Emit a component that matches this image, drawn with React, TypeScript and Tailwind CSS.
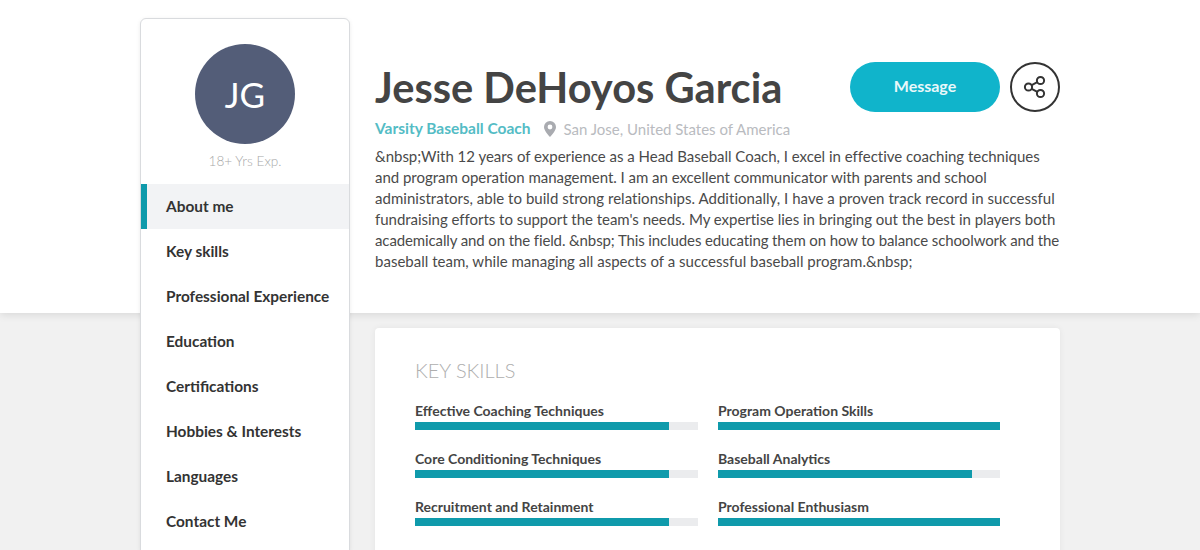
import React from "react";

const nav = ["About me", "Key skills", "Professional Experience", "Education", "Certifications", "Hobbies & Interests", "Languages", "Contact Me"];
const skills: [string, number, number][] = [
  ["Effective Coaching Techniques", 254, 283],
  ["Program Operation Skills", 282, 282],
  ["Core Conditioning Techniques", 254, 283],
  ["Baseball Analytics", 254, 282],
  ["Recruitment and Retainment", 254, 283],
  ["Professional Enthusiasm", 282, 282],
];
const bio: [string, string][] = [
  ["&nbsp;With 12 years of experience as a Head Baseball Coach, I excel in effective coaching techniques", "block tracking-[-0.02px]"],
  ["and program operation management. I am an excellent communicator with parents and school", "block tracking-[-0.03px]"],
  ["administrators, able to build strong relationships. Additionally, I have a proven track record in successful", "block tracking-[0.03px]"],
  ["fundraising efforts to support the team's needs. My expertise lies in bringing out the best in players both", "block tracking-[-0.03px]"],
  ["academically and on the field. &nbsp; This includes educating them on how to balance schoolwork and the", "block tracking-[-0.115px]"],
  ["baseball team, while managing all aspects of a successful baseball program.&nbsp;", "block tracking-[0.02px]"],
];

export default function App() {
  return (
    <div className="relative h-[550px] w-full overflow-hidden bg-[#f1f1f1] font-['Lato',sans-serif]">
      <div className="absolute inset-x-0 top-0 h-[313px] bg-white shadow-[0_2px_8px_rgba(0,0,0,0.1)]" />
      <div className="relative mx-auto flex w-[920px] items-start gap-[25px] pt-[18px]">
        <aside className="w-[210px] shrink-0 rounded-t-[6px] border border-[#d9dbde] bg-white pt-[25px] shadow-[0_1px_4px_rgba(0,0,0,0.08)]">
          <div className="flex flex-col items-center">
            <div className="flex h-[100px] w-[100px] items-center justify-center rounded-full bg-[#535d78] text-[35px] font-normal text-white">JG</div>
            <div className="mt-[8px] text-[13.600px] leading-[18px] font-light text-[#a8a8a8]">18+ Yrs Exp.</div>
          </div>
          <nav className="mt-[14px] pb-[6px]">
            {nav.map((item, i) => (
              <div
                key={item}
                className={
                  i === 0
                    ? "flex h-[45px] items-center border-l-[6px] border-[#0f9aab] bg-[#f2f3f5] pl-[19px] text-[15.400px] font-bold text-[#333333]"
                    : "flex h-[45px] items-center pl-[25px] text-[15.400px] font-bold text-[#333333]"
                }
              >
                {item}
              </div>
            ))}
          </nav>
        </aside>

        <main className="min-w-0 flex-1">
          <div className="flex h-[94px] items-start justify-between">
            <h1 className="mt-[42px] text-[41.600px] leading-[54px] font-bold text-[#444444]">Jesse DeHoyos Garcia</h1>
            <div className="mt-[44px] flex items-center gap-[10px]">
              <button className="h-[50px] w-[150px] rounded-full bg-[#10b4cb] pb-[2px] text-[16px] font-bold text-[#e9f8fa]">Message</button>
              <button className="flex h-[50px] w-[50px] items-center justify-center rounded-full border-2 border-[#333333] bg-white text-[#333333]">
                <svg width="26" height="26" viewBox="0 0 26 26" fill="none" stroke="currentColor" strokeWidth="2">
                  <circle cx="18.5" cy="6.5" r="3.6" />
                  <circle cx="6.5" cy="13" r="3.6" />
                  <circle cx="18.5" cy="19.5" r="3.6" />
                  <path d="M9.700 11.200l5.600-3M9.700 14.800l5.600 3" />
                </svg>
              </button>
            </div>
          </div>

          <div className="mt-[7px] flex h-[20px] items-center text-[15px]">
            <span className="text-[15.500px] font-bold text-[#54bcc5]">Varsity Baseball Coach</span>
            <svg className="ml-[13px] text-[#a9abb0]" width="12" height="16" viewBox="0 0 12 16" fill="currentColor">
              <path fillRule="evenodd" d="M6 0a6 6 0 0 0-6 6c0 3.600 4.400 8.400 6 10 1.600-1.600 6-6.400 6-10a6 6 0 0 0-6-6zm0 3.600a2.400 2.400 0 1 1 0 4.800 2.400 2.400 0 0 1 0-4.800z" />
            </svg>
            <span className="ml-[8px] text-[#b9bbc0]">San Jose, United States of America</span>
          </div>

          <p className="mt-[7px] whitespace-nowrap text-[15px] leading-[21px] text-[#4a4a4a]">
            {bio.map(([line, cls]) => (
              <span key={line} className={cls}>{line}</span>
            ))}
          </p>

          <section className="mt-[56px] rounded-[4px] bg-white px-[40px] pt-[29px] pb-[40px] shadow-[0_0_6px_rgba(0,0,0,0.06)]">
            <h2 className="text-[20px] leading-[26px] font-light text-[#aeaeae]">KEY SKILLS</h2>
            <div className="mt-[19px] grid w-[585px] grid-cols-[283px_282px] gap-x-[20px] gap-y-[20px]">
              {skills.map(([name, fill, track]) => (
                <div key={name}>
                  <div className="text-[14px] leading-[18px] font-bold text-[#444444]">{name}</div>
                  <div className="mt-[2px] h-[8px] bg-[#ebecee]" style={{ width: track }}>
                    <div className="h-full bg-[#0f9aab]" style={{ width: fill }} />
                  </div>
                </div>
              ))}
            </div>
          </section>
        </main>
      </div>
    </div>
  );
}
